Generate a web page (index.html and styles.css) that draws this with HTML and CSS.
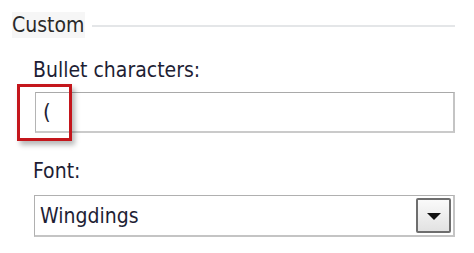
FILE: index.html
```html
<!DOCTYPE html>
<html lang="en">
<head>
  <meta charset="UTF-8" />
  <title>Bullet options</title>
  <link rel="stylesheet" href="styles.css">
</head>
<body>
  <div class="panel">
    <!-- Group header -->
    <div class="group-header">
      <span class="group-title">Custom</span>
      <div class="group-line"></div>
    </div>

    <div class="field">
      <div class="field-label">Bullet characters:</div>
      <div class="input-wrap">
        <div class="text-input">(</div>
        <div class="highlight"></div>
      </div>
    </div>

    <div class="field">
      <div class="field-label font-label">Font:</div>
      <div class="select">
        <span class="select-value">Wingdings</span>
        <span class="select-button"><span class="arrow"></span></span>
      </div>
    </div>
  </div>
</body>
</html>
```

FILE: styles.css
```css
body {
  margin: 0;
  background: #fff;
  font-family: "DejaVu Sans Condensed", "DejaVu Sans", sans-serif;
  font-size: 21px;
  color: #1e1e34;
}

.panel {
  width: 474px;
  height: 253px;
  overflow: hidden;
}

.group-header {
  display: flex;
  align-items: center;
  margin-top: 12px;
  padding-left: 12px;
  padding-right: 19px;
}

.group-title {
  line-height: 25px;
  padding: 1px 1px 0 0;
  background: #f6f6f6;
  color: #2a2a2a;
}

.group-line {
  flex: 1;
  height: 2px;
  background: #e4e6e8;
  margin-left: 7px;
  margin-top: 1px;
}

.field {
  padding-left: 33px;
  padding-right: 19px;
}

.field-label {
  line-height: 24px;
  margin-top: 20px;
}

.font-label {
  margin-top: 26px;
}

.input-wrap {
  position: relative;
  margin-top: 10px;
}

.text-input {
  height: 38px;
  border-top: 1px solid #a9a9a9;
  border-left: 1px solid #b4b4b4;
  border-right: 2px solid #c4c4c4;
  border-bottom: 2px solid #cacaca;
  line-height: 38px;
  padding-left: 7px;
  margin-left: 2px;
  font-size: 22px;
}

/* red callout box drawn over the input */
.highlight {
  position: absolute;
  left: -16px;
  top: -8px;
  width: 49px;
  height: 51px;
  border: 3px solid #c4161c;
  box-shadow: 3px 4px 5px rgba(0, 0, 0, 0.28);
}

.select {
  display: flex;
  align-items: center;
  height: 39px;
  margin-top: 12px;
  margin-left: 1px;
  border: 1px solid #b0b0b0;
  border-right-width: 2px;
  border-bottom-width: 2px;
  border-bottom-color: #c4c4c4;
  border-right-color: #c4c4c4;
}

.select-value {
  flex: 1;
  padding-left: 5px;
}

.select-button {
  display: flex;
  align-items: center;
  justify-content: center;
  width: 31px;
  height: 31px;
  margin-right: 2px;
  border: 2px solid #6e6e6e;
  border-radius: 2px;
  background: linear-gradient(#fafafa, #e2e2e2);
}

.arrow {
  width: 0;
  height: 0;
  border-left: 7px solid transparent;
  border-right: 7px solid transparent;
  border-top: 7px solid #111;
  margin-top: 2px;
}
```
